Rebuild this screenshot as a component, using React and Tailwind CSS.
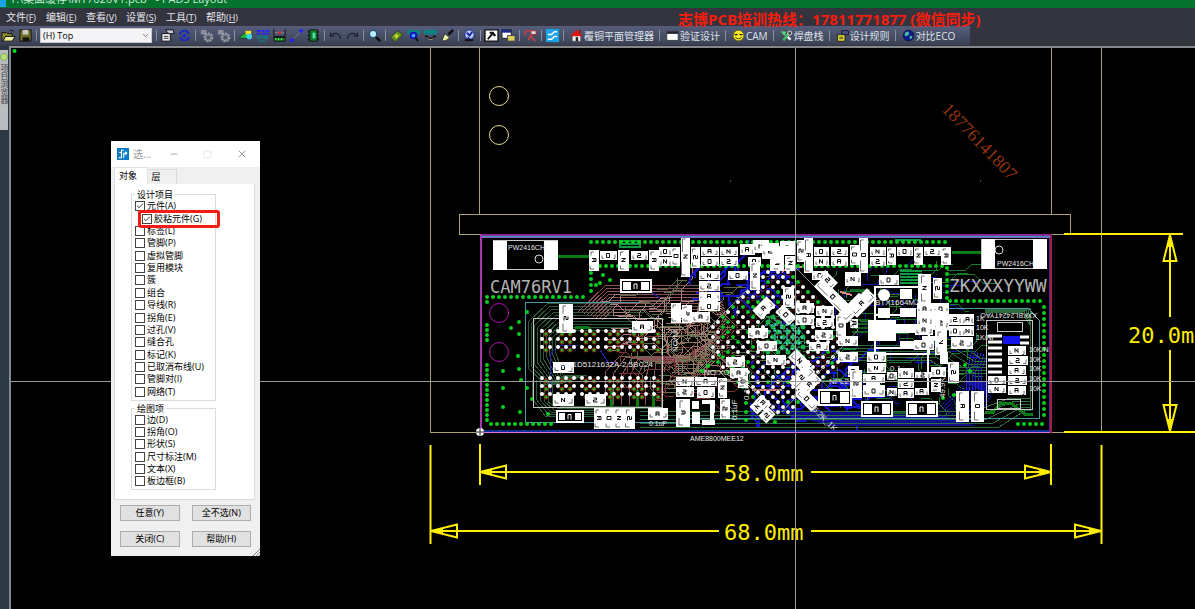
import React, { useState } from 'react';
import { Check, Minus, Square, X, Undo, Redo, ChevronDown } from 'lucide-react';

const MENUS = [
  ['文件', 'F'],
  ['编辑', 'E'],
  ['查看', 'V'],
  ['设置', 'S'],
  ['工具', 'T'],
  ['帮助', 'H'],
];

const DESIGN_ITEMS = [
  '元件(A)', '胶粘元件(G)', '标签(L)', '管脚(P)', '虚拟管脚', '复用模块', '簇', '组合',
  '导线(R)', '拐角(E)', '过孔(V)', '缝合孔', '标记(K)', '已取消布线(U)', '管脚对(I)', '网络(T)',
];

const DRAWING_ITEMS = ['边(D)', '拐角(O)', '形状(S)', '尺寸标注(M)', '文本(X)', '板边框(B)'];

/* ---------- toolbar icons, 16x16 grid ---------- */

const ICONS = {
  open: <><path d="M1 5h5l1 1h5v3H5l-3 5H1z" fill="#8a8a20" stroke="#111" /><path d="M2 14l3-5h10l-3 5z" fill="#f0ee9a" stroke="#111" /><path d="M9 3q3-2 5 1" fill="none" stroke="#111" /></>,
  save: <><path d="M2 2h12v12H2z" fill="#6d6d22" stroke="#111" /><path d="M5 2h6v5H5z" fill="#c9c9c9" /><path d="M5 10h7v4H5z" fill="#111" /></>,
  props: <><path d="M2 6h9v8H2z" fill="#eee" stroke="#111" /><path d="M6 2h8l1 4h-5l-2-1z" fill="#c8ccd8" stroke="#111" /><path d="M4 9h5M4 11h5" stroke="#333" /></>,
  cycle: <><path d="M3 7a5 5 0 0 1 9-2M13 9a5 5 0 0 1-9 2" fill="none" stroke="#1628c0" strokeWidth="2" /><circle cx="8" cy="8" r="2" fill="#1628e0" /><path d="M11 2l3 4h-4zM5 14l-3-4h4z" fill="#1628c0" /></>,
  gears: <><path d="M2 2h6v5H2z" fill="#8b8f9a" /><circle cx="10" cy="10" r="4" fill="#6e7280" stroke="#9a9ea8" strokeWidth="2.5" strokeDasharray="2 1" /><circle cx="10" cy="10" r="1.5" fill="#4a4e5c" /></>,
  shapes: <><path d="M1 11l5-5h5v5z" fill="#22c040" stroke="#111" strokeWidth=".6" /><path d="M8 3h6v4H8z" fill="#f5e020" /><circle cx="12" cy="9" r="3" fill="#35d8e8" /></>,
  grid: <><path d="M2 3h4M7 3h3M11 3h4M2 6h3M7 6h4M12 6h3" stroke="#2222ff" strokeWidth="2" /><path d="M2 9h12M2 11h4M8 11h6M4 14h7" stroke="#157a86" strokeWidth="1.5" /></>,
  dim: <><path d="M2 1v8h12V1" fill="none" stroke="#111" /><path d="M3 5h10" stroke="#888" /><circle cx="8" cy="5" r="1.5" fill="#e02020" /><path d="M2 10h12v4H2z" fill="#158020" stroke="#111" /><path d="M4 11v2M7 11v2M10 11v2" stroke="#8f8" /></>,
  link: <><path d="M3 13L13 3" stroke="#88a" strokeDasharray="2 1" /><circle cx="3" cy="13" r="2" fill="#2020ff" /><circle cx="13" cy="3" r="2" fill="#2020ff" /></>,
  chip: <><path d="M2 4h12M2 8h12M2 12h12" stroke="#111" strokeWidth="2" strokeDasharray="1.5 1" /><path d="M4 2h8v12H4z" fill="#157a30" stroke="#111" /><path d="M7 5h3v6H7z" fill="#40e8a0" /></>,
  zoom: <><path d="M9 9l5 5" stroke="#111" strokeWidth="3" /><circle cx="6.5" cy="6.5" r="4" fill="#b8f0ff" stroke="#2a4a70" strokeWidth="1.5" /></>,
  board: <><path d="M1 10l8-7 6 4-8 8z" fill="#5a8a20" stroke="#222" strokeWidth=".7" /><path d="M5 9l4-3M7 11l4-4" stroke="#d8e860" /><circle cx="8" cy="9" r="1.5" fill="#e8e020" /></>,
  search: <><path d="M1 2h14v5H1z" fill="#108080" /><circle cx="8" cy="8" r="3" fill="#40a8ff" stroke="#1010c0" strokeWidth="2" /><path d="M10 10l3 4" stroke="#111" strokeWidth="2" /></>,
  arc: <><path d="M1 2h14v5H1z" fill="#108080" /><path d="M3 8q5 8 10 0" fill="none" stroke="#111" strokeWidth="2.5" /><path d="M4 10q4 5 8 0" fill="none" stroke="#eee" strokeWidth=".7" /></>,
  brush: <><path d="M14 2l-5 5" stroke="#111" strokeWidth="3" /><path d="M5 6l5 4-3 3-5 1z" fill="#f0f0a0" stroke="#111" strokeWidth=".7" /></>,
  help: <><circle cx="8" cy="7" r="5" fill="#b8c8f0" stroke="#1428a0" /><path d="M5 5l3 3 3-4M6 10l3 3" stroke="#1428a0" strokeWidth="2" fill="none" /><path d="M3 13h9" stroke="#111" strokeWidth="2" /></>,
  tool: <><path d="M1 2h14v12H1z" fill="#fff" stroke="#111" strokeWidth="1.5" /><path d="M4 12l5-6" stroke="#111" strokeWidth="2" /><path d="M6 4h4l3 4-2 1-3-3H6z" fill="#111" /></>,
  layers: <><path d="M1 2h10v9H1z" fill="#fff" stroke="#111" /><path d="M1 2h10v3H1z" fill="#1c2a90" /><path d="M7 8h8v6H7z" fill="#d8d058" stroke="#444" /></>,
  route: <><path d="M2 8q-1-6 6-5l4 2-4 2M6 13l2-5 5 6" fill="none" stroke="#b84048" strokeWidth="2" /><path d="M8 3h6v4H9z" fill="#ddd" stroke="#a03038" /></>,
  pads: <><path d="M1 1h14v14H1z" fill="#1ba4e8" /><path d="M3 7h4l3-3h3M3 12h4l3-3h3" stroke="#fff" fill="none" strokeWidth="1.5" /></>,
  house: <><path d="M3 8v7h10V8z" fill="#f2f2f2" stroke="#555" strokeWidth=".6" /><path d="M1 8l7-7 7 7v1H1z" fill="#d81818" /><path d="M11 1h2v4h-2z" fill="#a01010" /><path d="M7 10h3v5H7z" fill="#222" /></>,
  window: <><path d="M1 3h14v11H1z" fill="#fff" stroke="#333" /><path d="M1 3h14v3H1z" fill="#20242e" /></>,
  smile: <><circle cx="8" cy="8" r="6.5" fill="#f8ec28" stroke="#6a6410" /><path d="M3 6h4v1q-2 2-4 0zM9 6h4v1q-2 2-4 0z" fill="#222" /><path d="M4 10q4 4 8 0" fill="none" stroke="#222" /></>,
  padstack: <><path d="M2 3l11 10" stroke="#eee" strokeWidth="3" /><path d="M13 3L4 14" stroke="#3bb860" strokeWidth="3" /><circle cx="5" cy="5" r="3" fill="#58d080" stroke="#222" strokeWidth=".7" /><circle cx="12" cy="5" r="2.5" fill="#444" stroke="#eee" /></>,
  rules: <><path d="M2 7h9v8H2z" fill="#f0e838" stroke="#111" /><path d="M7 2h8l1 5h-6l-3-1z" fill="#46528a" stroke="#111" /><path d="M4 10h5M4 12h5" stroke="#222" /></>,
  globe: <><circle cx="8" cy="8" r="6.5" fill="#0c1a90" stroke="#0a1040" /><path d="M4 4l4-1 1 3-3 3-3-1zM10 8l3 1-2 4-2-2z" fill="#48b8a0" /></>,
};

function Glyph({ name, className = 'w-[13px] h-[13px]' }) {
  return (
    <svg viewBox="0 0 16 16" className={`shrink-0 ${className}`} aria-hidden="true">
      {ICONS[name]}
    </svg>
  );
}

function ToolGroup({ names }) {
  return (
    <>
      {names.map((n, i) => (
        <button key={n + i} aria-label={n} className="w-[17px] h-full flex items-center justify-center shrink-0 text-[#171b28]">
          {n === 'undo' && <Undo size={13} />}
          {n === 'redo' && <Redo size={13} />}
          {ICONS[n] && <Glyph name={n} className="w-[15px] h-[15px]" />}
        </button>
      ))}
      <Sep />
    </>
  );
}

function Sep() {
  return (
    <div className="w-[5px] h-full flex items-center justify-center shrink-0">
      <div className="w-px h-[11px] bg-[#8a8fa2]" />
    </div>
  );
}

function LabelTool({ icon, text, last }) {
  return (
    <>
      <button className="h-full pl-1 pr-[3px] flex items-center gap-px text-[10px] leading-4 text-[#dfe2ea] whitespace-nowrap shrink-0">
        <Glyph name={icon} />
        {text}
      </button>
      {!last && <Sep />}
    </>
  );
}

function Toolbar() {
  return (
    <div className="h-[19px] flex bg-[#33343e] overflow-hidden">
      <div className="flex items-center h-full pr-3 bg-linear-to-b from-[#565d7c] to-[#3b4153]">
        <ToolGroup names={['open', 'save']} />
        <div className="relative w-[112px] h-[15px] ml-px mr-[2px] shrink-0">
          <select aria-label="层" className="appearance-none w-full h-full bg-[#f4f4f6] border border-[#c8c8d0] text-[9px] leading-3 text-black pl-[2px] block">
            <option>(H) Top</option>
            <option>Bottom</option>
          </select>
          <ChevronDown size={9} className="absolute right-[2px] top-[3px] text-[#555] pointer-events-none" />
        </div>
        <Sep />
        <ToolGroup names={['props', 'cycle']} />
        <ToolGroup names={['gears', 'gears']} />
        <ToolGroup names={['shapes', 'grid', 'dim', 'link', 'chip']} />
        <ToolGroup names={['undo', 'redo']} />
        <ToolGroup names={['zoom']} />
        <ToolGroup names={['board', 'search', 'arc', 'brush']} />
        <ToolGroup names={['help']} />
        <ToolGroup names={['tool', 'layers']} />
        <ToolGroup names={['route']} />
        <ToolGroup names={['pads']} />
        <LabelTool icon="house" text="覆铜平面管理器" />
        <LabelTool icon="window" text="验证设计" />
        <LabelTool icon="smile" text="CAM" />
        <LabelTool icon="padstack" text="焊盘栈" />
        <LabelTool icon="rules" text="设计规则" />
        <LabelTool icon="globe" text="对比ECO" last />
      </div>
    </div>
  );
}

/* ---------- board drawing ---------- */

// small parts: x, y, w, h
const PARTS = [
  [589, 250, 10, 21], [600, 251, 17, 9], [618, 250, 11, 21], [631, 251, 17, 9], [649, 250, 10, 21], [659, 247, 13, 9], [659, 257, 13, 9],
  [559, 304, 14, 29], [632, 321, 21, 12], [553, 362, 21, 11], [553, 394, 21, 12], [585, 394, 21, 12],
  [594, 408, 10, 21], [604, 408, 10, 21], [614, 408, 10, 21], [624, 408, 11, 21], [648, 408, 20, 12],
  [672, 247, 8, 19], [681, 237, 9, 40], [691, 247, 9, 21], [701, 247, 18, 9], [701, 257, 18, 9], [720, 247, 18, 9], [720, 257, 18, 9],
  [740, 244, 15, 11], [748, 257, 13, 9], [753, 240, 16, 13], [762, 243, 17, 16], [770, 256, 14, 15], [780, 241, 15, 14], [785, 256, 11, 15],
  [797, 240, 8, 22], [804, 238, 9, 35], [814, 247, 15, 9], [814, 257, 15, 9], [831, 247, 17, 9], [831, 257, 17, 9], [850, 245, 9, 20],
  [699, 271, 21, 9], [699, 281, 21, 10], [699, 292, 21, 9], [699, 302, 21, 9], [671, 303, 10, 20], [682, 305, 10, 18], [692, 312, 18, 10],
  [728, 271, 20, 9], [750, 262, 10, 28], [783, 287, 11, 20], [796, 303, 18, 10], [796, 315, 18, 10], [816, 306, 18, 10], [816, 318, 18, 9],
  [748, 328, 20, 10], [757, 341, 20, 10], [766, 355, 20, 10], [815, 330, 18, 10], [809, 342, 20, 9], [836, 315, 10, 22],
  [838, 336, 20, 10], [838, 352, 20, 10], [848, 366, 11, 11], [812, 271, 16, 9], [845, 272, 16, 14],
  [726, 357, 19, 10], [730, 368, 18, 10], [738, 376, 10, 12], [676, 377, 18, 9], [676, 387, 18, 10], [695, 377, 22, 9], [697, 387, 18, 11],
  [718, 378, 9, 20], [720, 399, 10, 20], [676, 399, 14, 28],
  [859, 238, 9, 35], [870, 247, 16, 9], [870, 257, 16, 9], [887, 247, 9, 18], [897, 247, 16, 9], [914, 247, 9, 18], [924, 247, 17, 9], [941, 247, 10, 18],
  [879, 275, 20, 10], [918, 274, 13, 29], [933, 278, 9, 21], [917, 303, 16, 12], [933, 303, 16, 12], [917, 316, 16, 9], [933, 316, 16, 14],
  [915, 325, 18, 10], [914, 340, 20, 10], [935, 330, 12, 25], [949, 314, 13, 11], [962, 314, 12, 11], [949, 326, 13, 10], [962, 326, 12, 10], [951, 337, 22, 12],
  [850, 319, 8, 9], [867, 352, 19, 10], [867, 363, 19, 10], [850, 370, 12, 28], [863, 374, 22, 9], [863, 385, 22, 12],
  [898, 368, 16, 10], [898, 379, 16, 9], [898, 389, 16, 9], [887, 372, 10, 8], [887, 388, 10, 8], [915, 372, 16, 6], [915, 388, 14, 7],
  [931, 367, 15, 10], [931, 379, 10, 13], [948, 362, 11, 21], [956, 391, 13, 31], [971, 391, 13, 31],
  [1008, 346, 18, 9], [1008, 356, 20, 9], [1008, 366, 18, 9], [988, 376, 18, 8], [988, 385, 18, 8], [1008, 376, 19, 9], [1008, 386, 18, 9],
];

// parts turned on the diagonal: cx, cy, w, h, angle
const TURNED = [
  [764, 308, 20, 13, -45], [786, 315, 19, 11, 45], [800, 361, 22, 12, 45], [802, 377, 26, 12, -45], [810, 384, 22, 11, -45],
  [807, 399, 24, 12, 45], [758, 406, 13, 11, -45], [767, 415, 13, 11, -45], [763, 403, 14, 10, 45], [833, 297, 42, 12, 45],
  [853, 308, 30, 13, -45], [828, 280, 18, 10, 45], [862, 303, 28, 14, -45],
];

const BOXED = [[620, 279, 32, 14], [556, 410, 28, 13], [818, 389, 34, 17], [861, 401, 32, 16], [906, 401, 32, 16]];

const SOLID = [
  [493, 241, 14, 29], [544, 241, 14, 29], [982, 239, 13, 30], [1033, 239, 14, 30],
  [868, 320, 28, 21], [894, 324, 24, 9], [900, 289, 12, 10], [878, 308, 12, 10], [900, 308, 16, 9], [900, 341, 14, 8],
  [702, 400, 13, 4], [710, 404, 5, 9], [702, 420, 13, 5], [710, 413, 4, 9], [692, 401, 7, 8], [692, 412, 8, 12],
];

// bare patches laid over neighbouring parts
const PATCHES = [
  [760, 246, 36, 5], [774, 251, 10, 12], [917, 311, 32, 7], [932, 310, 8, 16], [922, 336, 20, 5], [940, 352, 8, 12],
  [672, 310, 14, 8], [700, 298, 18, 6], [866, 380, 14, 7],
];

// deterministic noise so the board is the same on each load
function makeRandom(seed) {
  let s = seed;
  return () => {
    s = (s * 1103515245 + 12345) % 2147483648;
    return s / 2147483648;
  };
}

function range(from, to, step) {
  const out = [];
  for (let v = from; v <= to; v += step) out.push(v);
  return out;
}

function dotPath(points) {
  return points.map(([x, y]) => `M${x} ${y}h0`).join('');
}

const GREEN_VIAS = [
  ...range(487, 584, 6).map((x) => [x, 297]),
  ...range(591, 945, 6).map((x) => [x, 242]),
  ...range(600, 945, 6).map((x) => [x, 266]),
  ...range(491, 556, 6).map((x) => [x, 424]),
  ...range(1018, 1044, 6).map((x) => [x, 424]),
  ...range(950, 1044, 6).map((x) => [x, 301]),
  ...range(307, 418, 6).map((y) => [1044, y]),
  ...range(325, 342, 5).map((y) => [487, y]),
  ...range(365, 422, 5).map((y) => [487, y]),
  ...range(250, 300, 6).map((y) => [947, y]),
  ...range(267, 296, 6).map((y) => [591, y]),
  [596, 285], [603, 275], [610, 280], [527, 312], [519, 322], [519, 334], [511, 328], [518, 356], [503, 371], [519, 369], [521, 380],
  [503, 388], [527, 388], [503, 407], [520, 412], [532, 399], [548, 414], [487, 302], [600, 283], [965, 365], [970, 371], [954, 395], [943, 398],
  [702, 371], [708, 366], [713, 360], [719, 355], [725, 350], [746, 403], [746, 412], [746, 420], [775, 422], [832, 363], [824, 377],
];

const PINS = [331, 339, 347, 378, 386, 394].flatMap((y) => range(542, 654, 8).map((x) => [x, y]));

function buildField() {
  const rnd = makeRandom(11);
  const white = [];
  const green = [];
  const red = [];
  const cyan = [];
  for (let i = -9; i <= 9; i++) {
    for (let j = -9; j <= 9; j++) {
      const x = 778 + (i + j) * 5;
      const y = 342 + (i - j) * 5;
      if (x < 712 || x > 838 || y < 268 || y > 412) continue;
      if (Math.abs(x - 778) + Math.abs(y - 342) > 80) continue;
      const mid = Math.abs(x - 785) < 20 && Math.abs(y - 337) < 22;
      if (mid) cyan.push([x, y]);
      else if (rnd() < (x < 755 ? 0.5 : 0.15)) green.push([x, y]);
      else white.push([x, y]);
      if (y < 385 && rnd() < 0.4) red.push([x + 1, y + 1]);
    }
  }
  return { white, green, red, cyan };
}

// short dog-leg traces scattered in a region
function scatter(seed, count, x0, y0, x1, y1) {
  const rnd = makeRandom(seed);
  let d = '';
  for (let i = 0; i < count; i++) {
    const x = Math.round(x0 + rnd() * (x1 - x0));
    const y = Math.round(y0 + rnd() * (y1 - y0));
    const a = Math.round(5 + rnd() * 22);
    const b = Math.round(3 + rnd() * 9) * (rnd() < 0.5 ? -1 : 1);
    d += rnd() < 0.6 ? `M${x} ${y}h${a}l${Math.abs(b)} ${b}h${Math.round(a / 2)}` : `M${x} ${y}v${b}l${Math.abs(b)} ${b}v${b}`;
  }
  return d;
}

const MARKS = ['M-2 2v-4h3v4M-2 0h3', 'M-2-2h3v4h-3z', 'M-2 2v-4l3 4v-4', 'M-2-2h3v2h-3v2h4'];

function Part({ x, y, w, h, i }) {
  const cx = x + w / 2;
  const cy = y + h / 2;
  const tall = h > w;
  const half = (tall ? h : w) / 2 - 2;
  return (
    <g>
      <rect x={x} y={y} width={w} height={h} fill="#fff" />
      <g transform={`translate(${cx} ${cy})${tall ? ' rotate(90)' : ''}`} fill="none" stroke="#111">
        <path d={MARKS[i % 4]} strokeWidth="1" />
        <path d={`M${-half} 0v3h${half - 5}M${half} ${i % 3 ? -1 : 0}v4h${5 - half}`} strokeWidth=".6" />
      </g>
    </g>
  );
}

function Traces() {
  return (
    <g fill="none" shapeRendering="crispEdges">
      {/* nested loops at the memory chip */}
      <g stroke="#2f5a38">
        {range(0, 9, 1).map((i) => (
          <path key={i} d={`M${650 - i * 2} ${303 + i * 3}H${548 + i * 2}L${528 + i * 3} ${322 + i * 2}V${368 - i * 2}L${545 + i * 2} ${384 - i}H${560 + i * 3}`} />
        ))}
        {range(0, 5, 1).map((i) => (
          <path key={i} d={`M${532 + i * 4} 380V${398 + i}L${545 + i * 3} ${416 - i * 2}H${600 + i * 12}`} />
        ))}
      </g>
      <g stroke="#8a5258">
        {range(0, 8, 1).map((i) => (
          <path key={i} d={`M${578 + i * 3} ${312 + i}L${606 + i} ${285 + i * 3}H${700 + i}L${722 + i} ${300 + i * 3}`} />
        ))}
        {range(0, 7, 1).map((i) => (
          <path key={i} d={`M${605 + i * 8} 405V${372 + i * 2}L${620 + i * 6} ${356 + i}H${700 - i * 4}L${730 - i * 4} ${326 + i * 3}`} />
        ))}
      </g>
      <g stroke="#77735a">
        {range(0, 9, 1).map((i) => (
          <path key={i} d={`M${662 + i * 2} ${392 - i * 4}H${684 + i * 2}L${718 + i} ${358 - i * 5}`} />
        ))}
      </g>
      <path stroke="#a98280" d={scatter(3, 36, 600, 300, 690, 350)} />
      <path stroke="#5f7048" d={scatter(5, 60, 620, 285, 730, 400)} />
      <path stroke="#7c3234" d={scatter(8, 44, 610, 330, 730, 400)} />
      <path stroke="#937664" d={scatter(19, 44, 655, 310, 715, 375)} />
      <path stroke="#2020b0" d="M550 393V355l8-10h20M600 350l8 12h8M648 290l12 8" />
      <path stroke="#1414c0" strokeWidth="1.5" d={scatter(9, 30, 690, 270, 780, 300)} />
      <path stroke="#1414d0" strokeWidth="1.5" d={scatter(12, 44, 750, 360, 850, 415)} />
      <path stroke="#1616a8" d={scatter(14, 44, 830, 270, 950, 400)} />
      <path stroke="#187a28" d={scatter(17, 56, 830, 270, 970, 400)} />
      <path stroke="#1c8a3a" d={scatter(25, 24, 740, 310, 820, 380)} />
      {/* bundles along the bottom and the right */}
      <g stroke="#10108c">
        {range(0, 13, 1).map((i) => (
          <path key={i} d={`M${770 + i * 4} ${402 + i}L${778 + i * 4} ${412 + i}H${935 + i * 3}L${965 + i * 2} ${382 + i}H988`} />
        ))}
      </g>
      <g stroke="#2020d8">
        {range(0, 5, 1).map((i) => (
          <path key={i} d={`M${966 + i * 3} 390V${376 - i}L${972 + i * 3} ${350 + i}`} />
        ))}
      </g>
      <g stroke="#2c6b3c">
        {range(0, 4, 1).map((i) => (
          <path key={i} d={`M640 ${411 + i * 4}H${975 + i * 6}L${1010 + i * 4} ${398 + i * 3}H1030V${325 - i * 2}L${1022 + i * 2} ${312 - i}H985`} />
        ))}
        {range(0, 5, 1).map((i) => (
          <path key={i} d={`M850 ${345 + i * 3}H${960 - i * 6}L${980 - i * 6} ${358 + i * 3}H986`} />
        ))}
      </g>
      <path stroke="#4a9aa8" d="M525 422V302H640M525 422H690M910 308H1028L1039 320V418H690" />
      <path stroke="#0a7a14" strokeWidth="3" d="M558 256H590M952 252H982M575 327h12l6 5M611 387v20M637 390v18M653 392v16M985 412h8l8-9h10l14 11h8" />
      <path stroke="#109a40" d="M620 241h20v6h-20zM620 244h20M895 240h26M900 271h22M900 274h22M900 277h22M900 280h22M900 283h22" strokeWidth="2" />
      <path stroke="#12601c" strokeWidth="2" d="M850 290h20M850 320h20M852 324h18M852 328h16M852 332h18M872 377v12M875 377v12M868 413h70" />
      <path stroke="#e88a90" strokeWidth="2" d="M782 272l6-5h14M840 292l12 3M752 390h30" />
    </g>
  );
}

function Silk() {
  return (
    <g fill="#e8e8e8" fontFamily='"Liberation Sans", sans-serif' fontSize="8">
      <g fontFamily='"DejaVu Sans Mono", monospace' fill="#b4b4b4">
        <text x="490" y="293" fontSize="17">CAM76RV1</text>
        <text x="949" y="292" fontSize="18">ZKXXXYYWW</text>
      </g>
      <text x="508" y="250" fontSize="7">PW2416CH</text>
      <text x="997" y="266" fontSize="7">PW2416CH</text>
      <text x="561" y="367" fontSize="8">NU1D5121632A-2.5BC24</text>
      <text x="690" y="441" fontSize="7">AME8800MEE12</text>
      <text x="875" y="305">BTX1664MJ</text>
      <text x="704" y="375">NO.XON</text>
      <text x="829" y="384">NPL2</text>
      <text x="649" y="426" fontSize="7">0.1uF</text>
      <text x="890" y="371">0.1</text>
      <text x="976" y="321" fontSize="7">1K</text>
      <text x="976" y="330" fontSize="7">10K</text>
      <text x="976" y="340" fontSize="7">1K/NI</text>
      <text x="1029" y="352" fontSize="7">10K/NI</text>
      <text x="1029" y="362" fontSize="7">10K</text>
      <text x="1029" y="371" fontSize="7">10K</text>
      <text x="1029" y="381" fontSize="7">10K</text>
      <text x="1029" y="391" fontSize="7">10K</text>
      <text transform="translate(1037 313) rotate(180)" fontSize="7">XXKBL2424TYAO</text>
      <text transform="translate(678 352) rotate(-90)">NO/NI</text>
      <text transform="translate(749 400) rotate(-90)">0.1uF</text>
      <text transform="translate(737 420) rotate(-90)">0.1uF</text>
      <text transform="translate(812 410) rotate(45)">6.2K_1K</text>
      <text transform="translate(945 398) rotate(-90)">49.9K</text>
    </g>
  );
}

function Arrow({ x, y, angle }) {
  return (
    <g transform={`translate(${x} ${y}) rotate(${angle})`}>
      <path d="M0 0L26 -6.5V6.5Z" fill="none" stroke="#ffee00" strokeWidth="2" />
      <path d="M0 0l12-3v6z" fill="#ffee00" stroke="none" />
    </g>
  );
}

function Dimensions() {
  return (
    <g stroke="#ffee00" strokeWidth="2" fill="none">
      <path d="M480 444V485M1051 444V485M480 472H719M811 472H1051" />
      <path d="M430.5 445V544M1101.5 445V544M430 531H719M811 531H1101" />
      <path d="M1064 234H1183M1064 432H1195M1170 234V317M1170 350V432" />
      <Arrow x={480} y={472} angle={0} />
      <Arrow x={1051} y={472} angle={180} />
      <Arrow x={431} y={531} angle={0} />
      <Arrow x={1101} y={531} angle={180} />
      <Arrow x={1170} y={235} angle={90} />
      <Arrow x={1170} y={431} angle={-90} />
      <g fill="#ffee00" stroke="none" fontFamily='"DejaVu Sans Mono", monospace' fontSize="22">
        <text x="724" y="481">58.0mm</text>
        <text x="724" y="540">68.0mm</text>
        <text x="1128" y="343">20.0mm</text>
      </g>
    </g>
  );
}

function Board() {
  const field = buildField();
  const pinVias = PINS.map(([x, y]) => [x + 4, y + 3]).filter((p, i) => i % 3 !== 1);
  return (
    <svg viewBox="11 48 1184 561" preserveAspectRatio="xMinYMin slice" className="absolute inset-0 w-full h-full" role="img" aria-label="PCB">
      {/* mechanical outline */}
      <g fill="none" stroke="#a9a36a" shapeRendering="crispEdges">
        <path d="M430.5 48V432.5H480M479.5 48V214.5M1051.5 48V214.5M1101.5 48V432.5H1052" />
        <path d="M459.5 214.5H1070.5V234.5H459.5Z" />
      </g>
      <g fill="none" stroke="#e0dc90">
        <circle cx="499" cy="96" r="9.5" />
        <circle cx="499" cy="135" r="9.5" />
      </g>
      <path d="M730 181h1M980 181h1" stroke="#999" />
      <circle cx="14.5" cy="51" r="2" fill="#00e020" />

      <Traces />

      <g fill="none" strokeLinecap="round">
        <path d={dotPath(GREEN_VIAS)} stroke="#08d020" strokeWidth="4" />
        <path d={dotPath(pinVias)} stroke="#8c1616" strokeWidth="5" />
        <path d={dotPath(pinVias)} stroke="#08c020" strokeWidth="3" />
        <path d={dotPath(PINS)} stroke="#fff" strokeWidth="4" />
        <path d={dotPath(field.red)} stroke="#8c1818" strokeWidth="6" />
        <path d={dotPath([...field.red, ...field.white, ...field.green])} stroke="#000" strokeWidth="5" />
        <path d={dotPath(field.green)} stroke="#0cc828" strokeWidth="4" />
        <path d={dotPath(field.cyan)} stroke="#18b048" strokeWidth="5" />
        <path d={dotPath(field.white)} stroke="#fff" strokeWidth="4" />
      </g>
      <path
        d="M765 325h36M768 331h34M770 337h34M774 343h30M780 349h20M775 318v28M781 316v34M787 318v34M793 318v32M799 322v26"
        stroke="#58e8e8"
        strokeDasharray="3 2"
      />

      <g fill="none" stroke="#c8c8c8" shapeRendering="crispEdges">
        <path d="M533.5 318.5H662.5V407.5H533.5Z" />
        <path d="M493.5 240.5H557.5V269.5H493.5ZM981.5 239.5H1046.5V268.5H981.5Z" />
        <path d="M986.5 320.5H1032.5V409.5H986.5ZM997.5 322.5H1022.5V331.5H997.5ZM997.5 399.5H1020.5V408.5H997.5Z" />
      </g>
      <path d="M748 289L700 337L778 415M790 262L858 330L782 412" fill="none" stroke="#8c8c8c" />
      <rect x="875" y="287" width="54" height="67" fill="none" stroke="#fff" strokeWidth="2" />
      <path d="M876 315h30M876 348h52M928 350v38" stroke="#fff" strokeWidth="2" />
      <circle cx="539" cy="259" r="4" fill="none" stroke="#ddd" />
      <circle cx="999" cy="250" r="4" fill="none" stroke="#ddd" />
      <circle cx="884" cy="295" r="6" fill="#fff" />
      <circle cx="499" cy="313" r="9.5" fill="none" stroke="#b010b0" />
      <circle cx="499" cy="352" r="9.5" fill="none" stroke="#b010b0" />

      <path d="M1003 336h17v8h-17z" fill="#1414e8" />
      {range(336, 374, 6).map((y) => (
        <path key={y} d={`M988 ${y}h14`} stroke="#fff" strokeWidth="3" />
      ))}
      <path d="M1020 337h9M1020 343h9" stroke="#fff" strokeWidth="3" />

      {SOLID.map(([x, y, w, h]) => (
        <rect key={`${x}-${y}`} x={x} y={y} width={w} height={h} fill="#fff" />
      ))}
      {PARTS.map(([x, y, w, h], i) => (
        <Part key={`${x}-${y}`} x={x} y={y} w={w} h={h} i={i} />
      ))}
      {TURNED.map(([cx, cy, w, h, a], i) => (
        <g key={`${cx}-${cy}`} transform={`translate(${cx} ${cy}) rotate(${a})`}>
          <Part x={-w / 2} y={-h / 2} w={w} h={h} i={i} />
        </g>
      ))}
      {PATCHES.map(([x, y, w, h]) => (
        <rect key={`${x}-${y}`} x={x} y={y} width={w} height={h} fill="#fff" />
      ))}
      {BOXED.map(([x, y, w, h]) => (
        <g key={`${x}-${y}`}>
          <rect x={x} y={y} width={w} height={h} fill="#fff" />
          <rect x={x + 2.5} y={y + 2.5} width={w - 5} height={h - 5} fill="none" stroke="#000" />
          <rect x={x + w / 2 - 5} y={y + 3} width="10" height={h - 6} fill="#000" />
          <path d={`M${x + w / 2 - 2} ${y + h / 2 + 3}v-5h3v5`} stroke="#fff" fill="none" />
        </g>
      ))}

      <Silk />

      {/* board edge */}
      <g fill="none" shapeRendering="crispEdges">
        <path d="M480 235H1052" stroke="#8a2a96" strokeWidth="2" />
        <path d="M480 236.5H1052" stroke="#34a0b8" />
        <path d="M480 237.5H1052" stroke="#8060c8" />
        <path d="M480 431H1052" stroke="#10309c" strokeWidth="2" />
        <path d="M480 432.5H1052" stroke="#e868e0" />
        <path d="M481 234V433" stroke="#a838b0" strokeWidth="2" />
        <path d="M1051 234V433" stroke="#a01c50" strokeWidth="2" />
        <path d="M1049.5 238V432" stroke="#58208c" />
      </g>
      <circle cx="480" cy="432" r="4" fill="#fff" />
      <path d="M476 432h8M480 428v8" stroke="#222" />

      <Dimensions />

      <path d="M795.5 48V609M11 381.5H1195" stroke="#9a9a9a" fill="none" shapeRendering="crispEdges" />
      <text transform="translate(941 110) rotate(46)" fill="#93330f" fontFamily='"Liberation Serif", serif' fontSize="18">
        18776141807
      </text>
    </svg>
  );
}

/* ---------- selection filter dialog ---------- */

function FilterCheck({ label, checked, onChange, nested }) {
  return (
    <label className={`relative flex flex-1 items-center gap-[2px] whitespace-nowrap ${nested ? 'pl-[10px]' : 'pl-[3px]'}`}>
      <span className="relative block w-[10px] h-[10px] shrink-0">
        <input
          type="checkbox"
          checked={checked}
          onChange={onChange}
          className="appearance-none block w-[10px] h-[10px] border border-[#444] bg-white"
        />
        {checked && <Check size={8} strokeWidth={3} className="absolute left-px top-px text-[#333] pointer-events-none" />}
      </span>
      {label}
      {nested && <span className="absolute left-[6px] -top-[2px] w-[82px] h-[18px] border-3 border-[#f41c10] rounded-[3px] pointer-events-none z-10" />}
    </label>
  );
}

function FilterGroup({ title, items, picked, onToggle, className }) {
  return (
    <fieldset className={`relative w-[85px] border border-[#dcdcdc] flex flex-col pt-[5px] pb-[2px] ${className}`}>
      <legend className="absolute left-[3px] -top-[6px] px-[2px] bg-white leading-3">{title}</legend>
      {items.map((item) => (
        <FilterCheck
          key={item}
          label={item}
          nested={item === '胶粘元件(G)'}
          checked={picked.includes(title + item)}
          onChange={() => onToggle(title + item)}
        />
      ))}
    </fieldset>
  );
}

function FilterDialog() {
  const [picked, setPicked] = useState(['设计项目元件(A)', '设计项目胶粘元件(G)']);

  function toggle(id) {
    setPicked(picked.includes(id) ? picked.filter((p) => p !== id) : [...picked, id]);
  }

  return (
    <div role="dialog" aria-label="选择筛选条件" className="absolute left-[100px] top-[93px] w-[149px] bg-[#f0f0f0] text-[9px] leading-3 text-black">
      <div className="h-[26px] bg-white flex items-center pl-[6px] pr-3 text-[#999]">
        <svg viewBox="0 0 16 16" className="w-3 h-3 mr-1">
          <path d="M0 0h16v16H0z" fill="#0d7cc4" />
          <path d="M2 13h4V3h3M9 13V7h4M11 5l2 2-2 2M3 6h3" fill="none" stroke="#fff" strokeWidth="1.5" />
        </svg>
        <span className="text-[10px]">选...</span>
        <div className="ml-auto flex items-center gap-[24px]">
          <button aria-label="最小化"><Minus size={10} strokeWidth={2} /></button>
          <button aria-label="最大化" disabled className="text-[#e2e2e2]"><Square size={9} strokeWidth={2} /></button>
          <button aria-label="关闭"><X size={12} strokeWidth={2} /></button>
        </div>
      </div>

      <div className="px-[3px]">
        <div role="tablist" className="flex items-end h-[17px]">
          <button role="tab" aria-selected="true" className="w-[34px] h-[17px] pl-1 text-left bg-white border border-b-0 border-[#e2e2e2]">对象</button>
          <button role="tab" aria-selected="false" className="w-[29px] h-[15px] pr-3 bg-[#f0f0f0] border border-b-0 border-l-0 border-[#d9d9d9]">层</button>
        </div>
        <div className="bg-white border border-t-0 border-[#dcdcdc] pl-4 pt-[10px] pb-[9px] mr-[2px]">
          <FilterGroup title="设计项目" items={DESIGN_ITEMS} picked={picked} onToggle={toggle} className="h-[207px]" />
          <FilterGroup title="绘图项" items={DRAWING_ITEMS} picked={picked} onToggle={toggle} className="h-[82px] mt-[7px]" />
        </div>
      </div>

      <div className="relative grid grid-cols-2 gap-x-3 gap-y-[10px] px-[9px] pt-[5px] pb-[9px]">
        {['任意(Y)', '全不选(N)', '关闭(C)', '帮助(H)'].map((t) => (
          <button key={t} className="h-4 bg-[#e1e1e1] border border-[#adadad]">{t}</button>
        ))}
        <svg viewBox="0 0 8 8" className="absolute right-0 bottom-0 w-2 h-2">
          <path d="M1 8L8 1M4 8L8 4M7 8L8 7" stroke="#8a8a8a" />
        </svg>
      </div>
    </div>
  );
}

export default function App() {
  return (
    <div className='h-screen flex flex-col overflow-hidden bg-[#33343e] font-["Open_Sans","Noto_Sans_CJK_SC",sans-serif]'>
      <header className="relative shrink-0 pb-px">
        {/* Title bar */}
        <div className="h-2 bg-[#04722c] overflow-hidden flex items-end gap-1 pb-px text-[11px] leading-4 text-[#c9ecd6] whitespace-nowrap">
          <span className="w-[6px] h-4 bg-[#1ba4e8]" />
          Y:\桌面缓存\MT7620V1.pcb* - PADS Layout
        </div>

        {/* Menu */}
        <nav className="h-[18px] flex items-center pl-[6px] text-[10px] leading-4 text-[#e6e6ea]">
          {MENUS.map(([name, key]) => (
            <button key={key} className="w-10 text-left whitespace-nowrap">
              {name}<span className="text-[9px]">(<u>{key}</u>)</span>
            </button>
          ))}
        </nav>

        <Toolbar />

        <p className="absolute left-[678px] top-[9px] text-[15px] leading-5 font-bold text-[#f81c0c] whitespace-nowrap">
          志博PCB培训热线：17811771877 (微信同步)
        </p>
      </header>

      <div className="flex flex-1 min-h-0">
        <aside className="w-[9px] shrink-0 bg-[#2c3843] pt-1 pr-px">
          <div className="h-20 bg-[#b9bcc0] flex flex-col items-center overflow-hidden text-[8px] leading-3 text-[#444]">
            <span className="w-2 h-2 my-[3px] shrink-0 rounded-full bg-[#b6e07c] border border-[#87a860]" />
            <span className="[writing-mode:vertical-rl]">项目浏览器</span>
          </div>
        </aside>
        <main className="relative flex-1 bg-black border-l-2 border-t-2 border-[#85878b] overflow-hidden">
          <Board />
          <FilterDialog />
        </main>
      </div>
    </div>
  );
}
